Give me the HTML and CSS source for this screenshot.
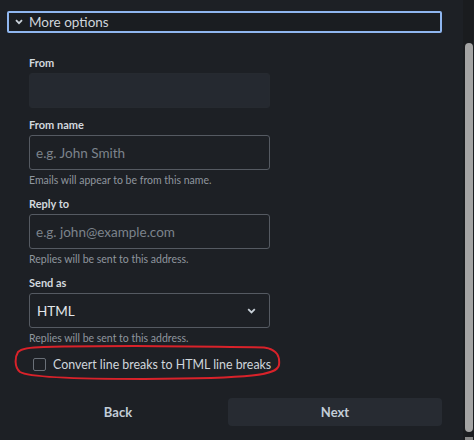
FILE: index.html
```html
<!DOCTYPE html>
<html lang="en">
<head>
<meta charset="utf-8">
<title>More options</title>
<link rel="stylesheet" href="styles.css">
</head>
<body>
<div class="frame">
  <main class="panel">
    <button class="toggle" type="button">
      <svg class="toggle-icon" width="8" height="6" viewBox="0 0 8 6"><path d="M1 1.2 L4 4.2 L7 1.2" fill="none" stroke="#c9d1d9" stroke-width="1.8"/></svg>
      <span>More options</span>
    </button>

    <form class="fields">
      <div class="field first">
        <label class="label">From</label>
        <div class="input disabled"></div>
      </div>
      <div class="field">
        <label class="label">From name</label>
        <div class="input"><span class="placeholder">e.g. John Smith</span></div>
        <p class="help">Emails will appear to be from this name.</p>
      </div>
      <div class="field">
        <label class="label">Reply to</label>
        <div class="input"><span class="placeholder">e.g. john@example.com</span></div>
        <p class="help">Replies will be sent to this address.</p>
      </div>
      <div class="field">
        <label class="label">Send as</label>
        <div class="input select"><span class="value">HTML</span>
          <svg width="9" height="6" viewBox="0 0 9 6"><path d="M1.2 1.2 L4.5 4.4 L7.8 1.2" fill="none" stroke="#c9d1d9" stroke-width="1.8"/></svg>
        </div>
        <p class="help">Replies will be sent to this address.</p>
      </div>
      <div class="check-row">
        <span class="checkbox"></span>
        <span class="check-text">Convert line breaks to HTML line breaks</span>
        <svg class="circle" width="268" height="36" viewBox="0 0 268 36"><path d="M30 2 C90 0.5 200 1 250 2.5 C264 4.5 266 12 265 20 C263 30 240 33.5 130 34 C60 34 14 32 6 27 C0 22 1 12 4 7 C8 3 18 2.2 30 2 Z" fill="none" stroke="#d9222a" stroke-width="2"/></svg>
      </div>
    </form>

    <div class="actions">
      <button class="btn back" type="button">Back</button>
      <button class="btn next" type="button">Next</button>
    </div>
  </main>
  <aside class="scrollbar">
    <div class="thumb"></div>
    <div class="arrow"></div>
  </aside>
</div>
</body>
</html>
```

FILE: styles.css
```css
* { box-sizing: border-box; }
html, body {
  margin: 0;
  padding: 0;
  width: 474px;
  height: 440px;
  overflow: hidden;
  background: #1d2025;
  font-family: Lato, "Open Sans", sans-serif;
  color: #cfd5dc;
}
.frame {
  display: flex;
  width: 474px;
  height: 440px;
}
.panel {
  flex: 1;
  padding: 11px 0 0 7px;
  width: 463px;
}
.toggle {
  display: flex;
  align-items: center;
  gap: 6px;
  width: 435px;
  height: 22px;
  padding: 0 0 0 6px;
  border: 2px solid #8fb6ef;
  border-radius: 2px;
  background: #1a1d21;
  color: #cfd5dc;
  font-family: inherit;
  font-size: 13.5px;
  line-height: 16px;
}
.toggle-icon { flex: none; }
.fields {
  padding-left: 22px;
  width: 262px;
  display: flex;
  flex-direction: column;
}
.field {
  display: flex;
  flex-direction: column;
  margin-top: 10px;
}
.field.first { margin-top: 23px; }
.label {
  font-size: 11px;
  font-weight: bold;
  line-height: 14px;
  color: #d2d8de;
  margin-bottom: 3px;
}
.input {
  width: 241px;
  height: 35px;
  border: 1px solid #555a62;
  border-radius: 3px;
  background: #1d2025;
  display: flex;
  align-items: center;
  padding: 0 6px;
}
.input.disabled {
  border-color: #262a30;
  background: #252930;
}
.placeholder {
  font-size: 13.5px;
  color: #7c838c;
}
.select {
  justify-content: space-between;
  padding: 0 13px 0 7px;
}
.value {
  font-size: 13.5px;
  color: #e2e6ea;
}
.help {
  margin: 4px 0 0;
  font-size: 10.5px;
  line-height: 13px;
  color: #8f969e;
}
.check-row {
  position: relative;
  display: flex;
  align-items: center;
  gap: 7px;
  margin-top: 11px;
  padding-left: 4px;
  height: 16px;
}
.checkbox {
  flex: none;
  width: 13px;
  height: 13px;
  border: 1.5px solid #6a7078;
  border-radius: 2px;
  background: #1d2025;
}
.check-text {
  font-size: 12.4px;
  color: #d0d6dc;
  white-space: nowrap;
}
.circle {
  position: absolute;
  left: -15px;
  top: -11px;
}
.actions {
  display: grid;
  grid-template-columns: 220px 214px;
  margin-top: 26px;
  margin-left: 1px;
}
.btn {
  height: 28px;
  border: none;
  border-radius: 4px;
  background: transparent;
  color: #c3cdd8;
  font-family: inherit;
  font-size: 13px;
  font-weight: bold;
}
.btn.next { background: #272b32; }
.scrollbar {
  position: relative;
  width: 11px;
  background: #1a1c1f;
}
.thumb {
  position: absolute;
  left: 2px;
  top: 43px;
  width: 8px;
  height: 389px;
  border-radius: 4px;
  background: #a4a4a4;
}
.arrow {
  position: absolute;
  left: 2px;
  top: 437px;
  width: 8px;
  height: 3px;
  background: #8a8a8a;
}
```
